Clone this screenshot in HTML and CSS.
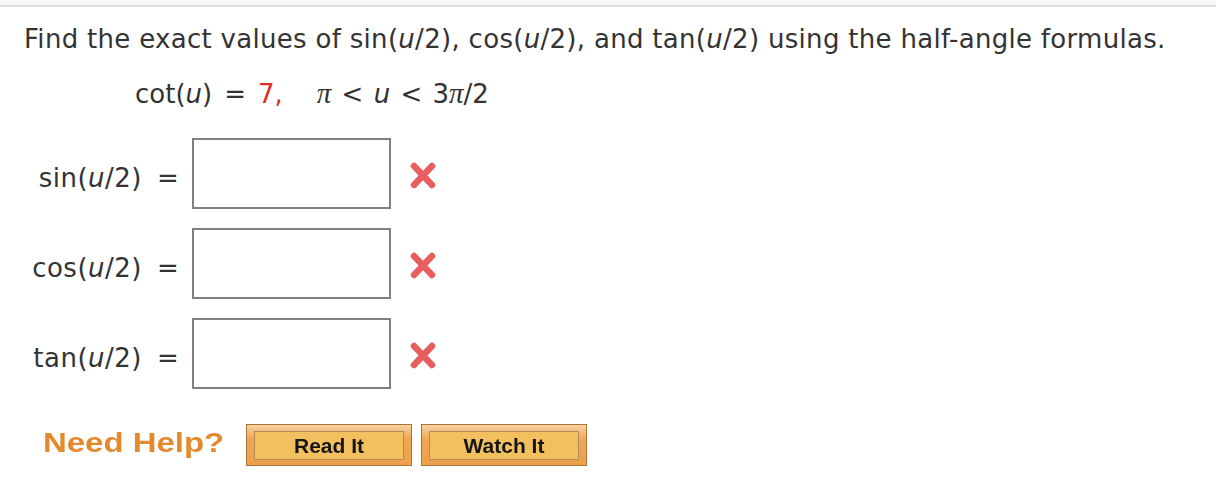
FILE: index.html
```html
<!DOCTYPE html>
<html>
<head>
<meta charset="utf-8">
<link rel="stylesheet" href="styles.css">
</head>
<body>
<div class="topbar"></div>
<div class="content">
  <p class="title">Find the exact values of sin(<i>u</i>/2), cos(<i>u</i>/2), and tan(<i>u</i>/2) using the half-angle formulas.</p>
  <div class="given">
    <span class="expr">cot(<i>u</i>)</span>
    <span class="eq">=</span>
    <span class="red">7,</span>
    <span class="range"><i class="pi">π</i> &lt; <i>u</i> &lt; 3<i class="pi">π</i>/2</span>
  </div>
  <div class="rows">
    <div class="row">
      <span class="label">sin(<i>u</i>/2)</span>
      <span class="eqs">=</span>
      <input class="box" type="text">
      <svg class="xmark" width="30" height="28" viewBox="0 0 30 28"><path d="M6 4 L24 23 M24 4 L6 23" /></svg>
    </div>
    <div class="row">
      <span class="label">cos(<i>u</i>/2)</span>
      <span class="eqs">=</span>
      <input class="box" type="text">
      <svg class="xmark" width="30" height="28" viewBox="0 0 30 28"><path d="M6 4 L24 23 M24 4 L6 23" /></svg>
    </div>
    <div class="row">
      <span class="label">tan(<i>u</i>/2)</span>
      <span class="eqs">=</span>
      <input class="box" type="text">
      <svg class="xmark" width="30" height="28" viewBox="0 0 30 28"><path d="M6 4 L24 23 M24 4 L6 23" /></svg>
    </div>
  </div>
  <div class="help">
    <span class="need">Need Help?</span>
    <span class="btn"><span class="btn-in">Read It</span></span>
    <span class="btn"><span class="btn-in">Watch It</span></span>
  </div>
</div>
</body>
</html>
```
FILE: styles.css
```css
body {
  margin: 0;
  background: #fff;
  font-family: "DejaVu Sans", Verdana, sans-serif;
  color: #333;
}
.topbar {
  height: 5px;
  background: #f6f6f6;
  border-bottom: 2px solid #dedede;
}
.content {
  padding-left: 24px;
}
.title {
  margin: 17px 0 0 0;
  font-size: 26px;
  letter-spacing: 0.3px;
  line-height: 30px;
  white-space: nowrap;
}
.given {
  display: flex;
  align-items: baseline;
  height: 30px;
  margin-top: 25px;
  padding-left: 111px;
  font-size: 26px;
  line-height: 30px;
}
.given .eq { margin-left: 12px; }
.given .red { color: #e02b20; margin-left: 12px; }
.given .range { margin-left: 34px; word-spacing: 2px; }
.pi {
  font-family: "Liberation Serif", serif;
  font-size: 29px;
  line-height: 20px;
}
.rows {
  display: flex;
  flex-direction: column;
  gap: 19px;
  margin-top: 29px;
}
.row {
  display: flex;
  align-items: center;
  height: 71px;
}
.label {
  width: 118px;
  text-align: right;
  font-size: 26px;
  letter-spacing: 0.5px;
  line-height: 30px;
  padding-top: 9px;
}
.eqs {
  font-size: 26px;
  line-height: 30px;
  margin-left: 15px;
  width: 35px;
  padding-top: 9px;
}
.box {
  box-sizing: border-box;
  width: 199px;
  height: 71px;
  border: 2px solid #808080;
  background: #fff;
  margin: 0;
  padding: 0;
}
.xmark {
  margin-left: 17px;
  margin-top: 4px;
}
.xmark path {
  fill: none;
  stroke: #e85d5d;
  stroke-width: 6.5;
  stroke-linecap: round;
  filter: blur(0.6px);
}
.help {
  display: flex;
  align-items: center;
  margin-top: 35px;
  gap: 9px;
}
.need {
  box-sizing: border-box;
  display: inline-block;
  width: 213px;
  padding-left: 19px;
  font-family: "Liberation Sans", Arial, sans-serif;
  font-weight: bold;
  font-size: 27px;
  color: #e4892e;
  transform: translateY(-2px) scaleX(1.22);
  transform-origin: 19px 50%;
  filter: blur(0.4px);
}
.btn {
  box-sizing: border-box;
  width: 166px;
  height: 42px;
  border: 1px solid #a7743a;
  background: linear-gradient(#f9d2a0 0%, #f0a652 35%, #eea04a 100%);
  padding: 6px 7px 5px 7px;
  display: flex;
}
.btn-in {
  flex: 1;
  border: 1px solid #b08a58;
  background: #f3c05f;
  display: flex;
  align-items: center;
  justify-content: center;
  font-family: "Liberation Sans", Arial, sans-serif;
  font-weight: bold;
  font-size: 21px;
  color: #151515;
  filter: blur(0.3px);
}
```
